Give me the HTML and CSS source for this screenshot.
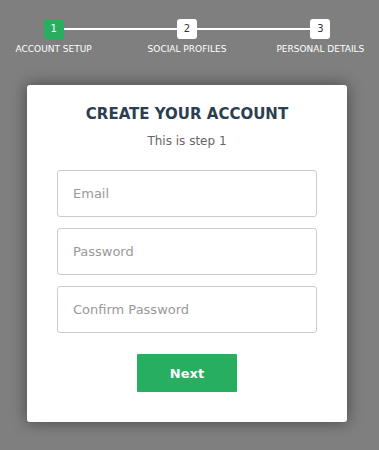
FILE: index.html
```html
<!DOCTYPE html>
<html>
<head>
<meta charset="utf-8">
<link rel="stylesheet" href="styles.css">
</head>
<body>
<form class="msform">
  <ul class="progressbar">
    <li class="step active"><span class="num">1</span><span class="label">Account Setup</span></li>
    <li class="step"><span class="num">2</span><span class="label">Social Profiles</span></li>
    <li class="step"><span class="num">3</span><span class="label">Personal Details</span></li>
  </ul>
  <fieldset class="card">
    <h2 class="fs-title">Create your account</h2>
    <h3 class="fs-subtitle">This is step 1</h3>
    <input class="field" type="text" placeholder="Email">
    <input class="field" type="password" placeholder="Password">
    <input class="field" type="password" placeholder="Confirm Password">
    <button class="action-button" type="button">Next</button>
  </fieldset>
</form>
</body>
</html>
```
FILE: styles.css
```css
html, body {
  margin: 0;
  padding: 0;
  background: #7f7f7f;
  height: 100%;
  overflow: hidden;
}
body {
  font-family: "DejaVu Sans", Verdana, sans-serif;
  padding-top: 19px;
  box-sizing: border-box;
}
.msform {
  width: 400px;
  margin-left: -13px;
  text-align: center;
}
.progressbar {
  list-style: none;
  margin: 0 0 30px 0;
  padding: 0;
  display: flex;
  counter-reset: step;
}
.step {
  width: 33.333%;
  position: relative;
  display: flex;
  flex-direction: column;
  align-items: center;
  color: #fff;
  text-transform: uppercase;
  font-size: 9px;
}
.step .num {
  position: relative;
  z-index: 1;
  display: block;
  width: 20px;
  height: 20px;
  line-height: 20px;
  font-size: 10px;
  color: #333;
  background: #fff;
  border-radius: 3px;
  margin-bottom: 5px;
}
.step.active .num {
  background: #27ae60;
  color: #fff;
}
.step + .step::after {
  content: "";
  position: absolute;
  left: -50%;
  top: 9px;
  width: 100%;
  height: 2px;
  background: #fff;
  z-index: 0;
}
.step .label {
  display: block;
  line-height: 11px;
}
.card {
  background: #fff;
  border: 0;
  border-radius: 3px;
  box-shadow: 0 0 15px 1px rgba(0, 0, 0, 0.4);
  padding: 20px 30px;
  box-sizing: border-box;
  width: 80%;
  margin: 0 10%;
  min-width: 0;
}
.fs-title {
  font-size: 15px;
  line-height: 18px;
  font-weight: bold;
  text-transform: uppercase;
  color: #2c3e50;
  margin: 0 0 10px 0;
}
.fs-subtitle {
  font-size: 12px;
  line-height: 16px;
  font-weight: normal;
  color: #666;
  margin: 0 0 21px 0;
}
.field {
  display: block;
  width: 100%;
  box-sizing: border-box;
  padding: 15px;
  line-height: 15px;
  height: 47px;
  border: 1px solid #ccc;
  border-radius: 3px;
  margin: 0 0 11px 0;
  font-family: "DejaVu Sans", Verdana, sans-serif;
  font-size: 13px;
  color: #2c3e50;
}
.field::placeholder {
  color: #999;
}
.action-button {
  display: block;
  width: 100px;
  height: 38px;
  margin: 21px auto 10px;
  background: #27ae60;
  color: #fff;
  font-family: "DejaVu Sans", Verdana, sans-serif;
  font-weight: bold;
  font-size: 13px;
  border: 0;
  border-radius: 1px;
  padding: 0;
}
```
